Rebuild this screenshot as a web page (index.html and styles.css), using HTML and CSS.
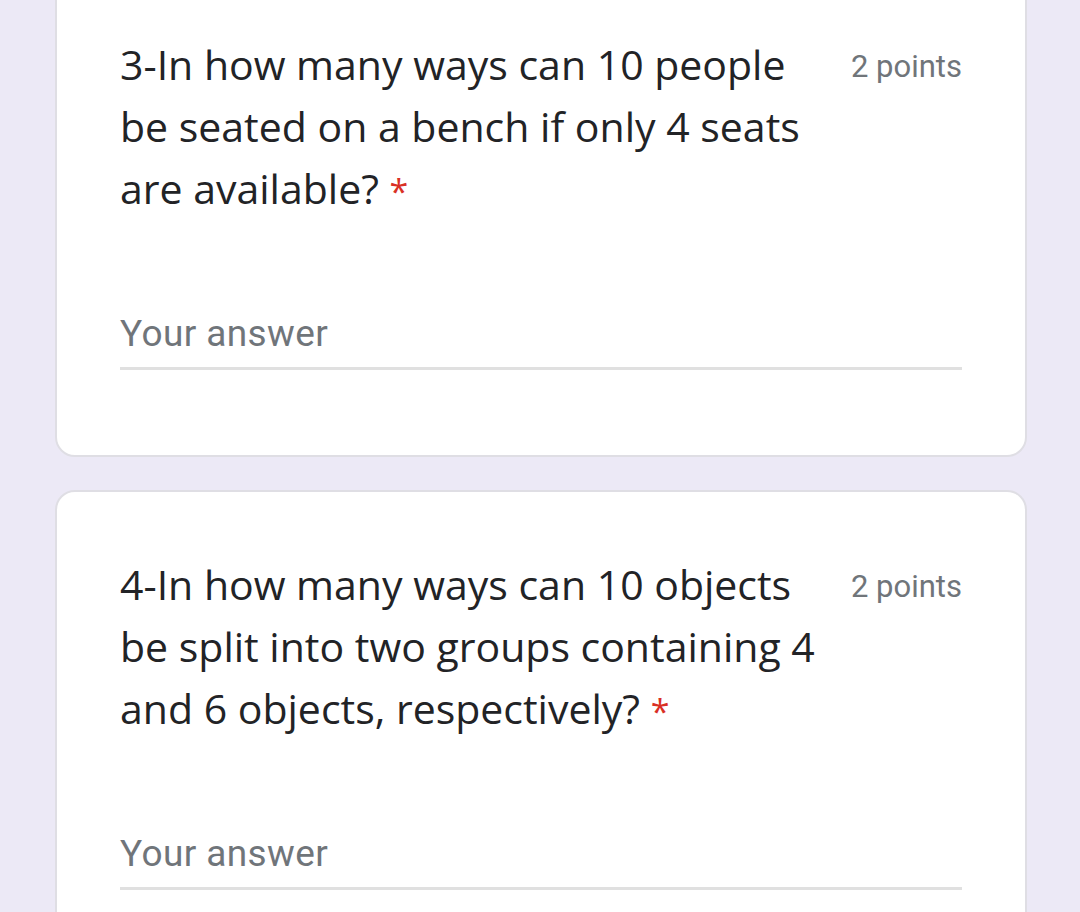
FILE: index.html
```html
<!DOCTYPE html>
<html>
<head>
<meta charset="utf-8">
<link rel="stylesheet" href="styles.css">
</head>
<body>
<div class="page">
  <div class="card">
    <div class="q-head">
      <div class="q-title">3-In how many ways can 10 people be seated on a bench if only 4 seats are available? <span class="req">*</span></div>
      <div class="q-points">2 points</div>
    </div>
    <div class="answer">Your answer</div>
  </div>
  <div class="card">
    <div class="q-head">
      <div class="q-title">4-In how many ways can 10 objects be split into two groups containing 4 and 6 objects, respectively? <span class="req">*</span></div>
      <div class="q-points">2 points</div>
    </div>
    <div class="answer">Your answer</div>
  </div>
</div>
</body>
</html>
```
FILE: styles.css
```css
html, body {
  margin: 0;
  padding: 0;
  background: #ece9f6;
  overflow: hidden;
}
.page {
  padding: 0 53px 0 55px;
  display: flex;
  flex-direction: column;
  gap: 33px;
  transform: translateY(-30px);
}
.card {
  background: #ffffff;
  border: 2px solid #dfdee4;
  border-radius: 20px;
  padding: 61px 63px 85px 63px;
}
.q-head {
  display: flex;
  justify-content: space-between;
  align-items: flex-start;
}
.q-title {
  font-family: "Open Sans", sans-serif;
  font-size: 41px;
  line-height: 62px;
  color: #222326;
  width: 700px;
}
.req {
  color: #d93025;
  font-size: 34px;
}
.q-points {
  margin-top: 15px;
  font-family: Roboto, sans-serif;
  font-size: 31px;
  color: #70757a;
}
.answer {
  margin-top: 90px;
  font-family: Roboto, sans-serif;
  font-size: 37px;
  letter-spacing: 0.4px;
  color: #70757a;
  padding-bottom: 12px;
  border-bottom: 3px solid #e0e0e0;
}
```
